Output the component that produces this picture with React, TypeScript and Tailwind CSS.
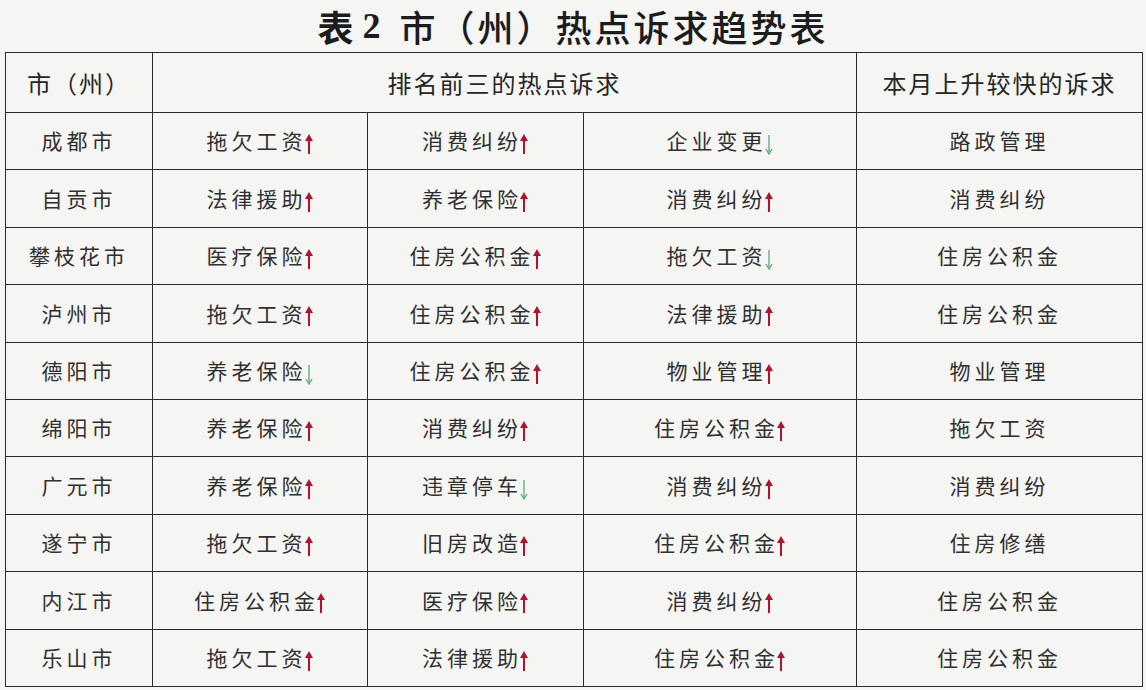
import React from 'react';

type Trend = 'up' | 'down';
type Item = [string, Trend];

interface Row {
  city: string;
  top: Item[];
  rising: string;
}

const rows: Row[] = [
  { city: '成都市', top: [['拖欠工资', 'up'], ['消费纠纷', 'up'], ['企业变更', 'down']], rising: '路政管理' },
  { city: '自贡市', top: [['法律援助', 'up'], ['养老保险', 'up'], ['消费纠纷', 'up']], rising: '消费纠纷' },
  { city: '攀枝花市', top: [['医疗保险', 'up'], ['住房公积金', 'up'], ['拖欠工资', 'down']], rising: '住房公积金' },
  { city: '泸州市', top: [['拖欠工资', 'up'], ['住房公积金', 'up'], ['法律援助', 'up']], rising: '住房公积金' },
  { city: '德阳市', top: [['养老保险', 'down'], ['住房公积金', 'up'], ['物业管理', 'up']], rising: '物业管理' },
  { city: '绵阳市', top: [['养老保险', 'up'], ['消费纠纷', 'up'], ['住房公积金', 'up']], rising: '拖欠工资' },
  { city: '广元市', top: [['养老保险', 'up'], ['违章停车', 'down'], ['消费纠纷', 'up']], rising: '消费纠纷' },
  { city: '遂宁市', top: [['拖欠工资', 'up'], ['旧房改造', 'up'], ['住房公积金', 'up']], rising: '住房修缮' },
  { city: '内江市', top: [['住房公积金', 'up'], ['医疗保险', 'up'], ['消费纠纷', 'up']], rising: '住房公积金' },
  { city: '乐山市', top: [['拖欠工资', 'up'], ['法律援助', 'up'], ['住房公积金', 'up']], rising: '住房公积金' },
];

const Arrow = ({ trend }: { trend: Trend }) =>
  trend === 'up' ? (
    <svg width="10" height="22" viewBox="0 0 10 22" className="-ml-[3px] inline-block translate-y-[3px]">
      <path d="M5 21V3" stroke="#b3122e" strokeWidth="2" />
      <path d="M1 8L5 1L9 8Z" fill="#b3122e" />
    </svg>
  ) : (
    <svg width="10" height="22" viewBox="0 0 10 22" className="-ml-[3px] inline-block translate-y-[4px]">
      <path d="M5 1V18" stroke="#5aa87a" strokeWidth="1.3" />
      <path d="M2 15L5 20L8 15" stroke="#5aa87a" strokeWidth="1.3" fill="none" />
    </svg>
  );

const cell = 'border-[1.5px] border-[#2a2a2a] text-center align-middle';

export default function App() {
  return (
    <div
      className="h-[690px] w-[1146px] overflow-hidden bg-[#f5f5f3] text-[#262626]"
      style={{ fontFamily: '"Noto Sans CJK SC", "Noto Sans", sans-serif' }}
    >
      <h1 className="flex h-[52px] items-center justify-center text-[36px] font-bold tracking-[3px] text-[#1c1c1c]">
        <span>表</span>
        <span className="ml-[6px] mr-[16px]" style={{ fontFamily: '"Liberation Serif", serif' }}>
          2
        </span>
        <span className="font-medium">市（州）热点诉求趋势表</span>
      </h1>
      <table className="ml-[5px] w-[1137px] table-fixed border-collapse">
        <colgroup>
          <col className="w-[147px]" />
          <col className="w-[215px]" />
          <col className="w-[216px]" />
          <col className="w-[273px]" />
          <col className="w-[286px]" />
        </colgroup>
        <thead>
          <tr className="h-[60px] text-[24px] tracking-[2px]">
            <th className={`${cell} font-normal`}>市（州）</th>
            <th colSpan={3} className={`${cell} font-normal`}>
              排名前三的热点诉求
            </th>
            <th className={`${cell} font-normal`}>本月上升较快的诉求</th>
          </tr>
        </thead>
        <tbody>
          {rows.map(({ city, top, rising }) => (
            <tr key={city} className="h-[57.4px] text-[21px] font-normal tracking-[4px] text-[#303030]">
              <td className={cell}>{city}</td>
              {top.map(([label, trend], i) => (
                <td key={i} className={cell}>
                  <span className="inline-flex items-center justify-center">
                    {label}
                    <Arrow trend={trend} />
                  </span>
                </td>
              ))}
              <td className={cell}>{rising}</td>
            </tr>
          ))}
        </tbody>
      </table>
    </div>
  );
}
